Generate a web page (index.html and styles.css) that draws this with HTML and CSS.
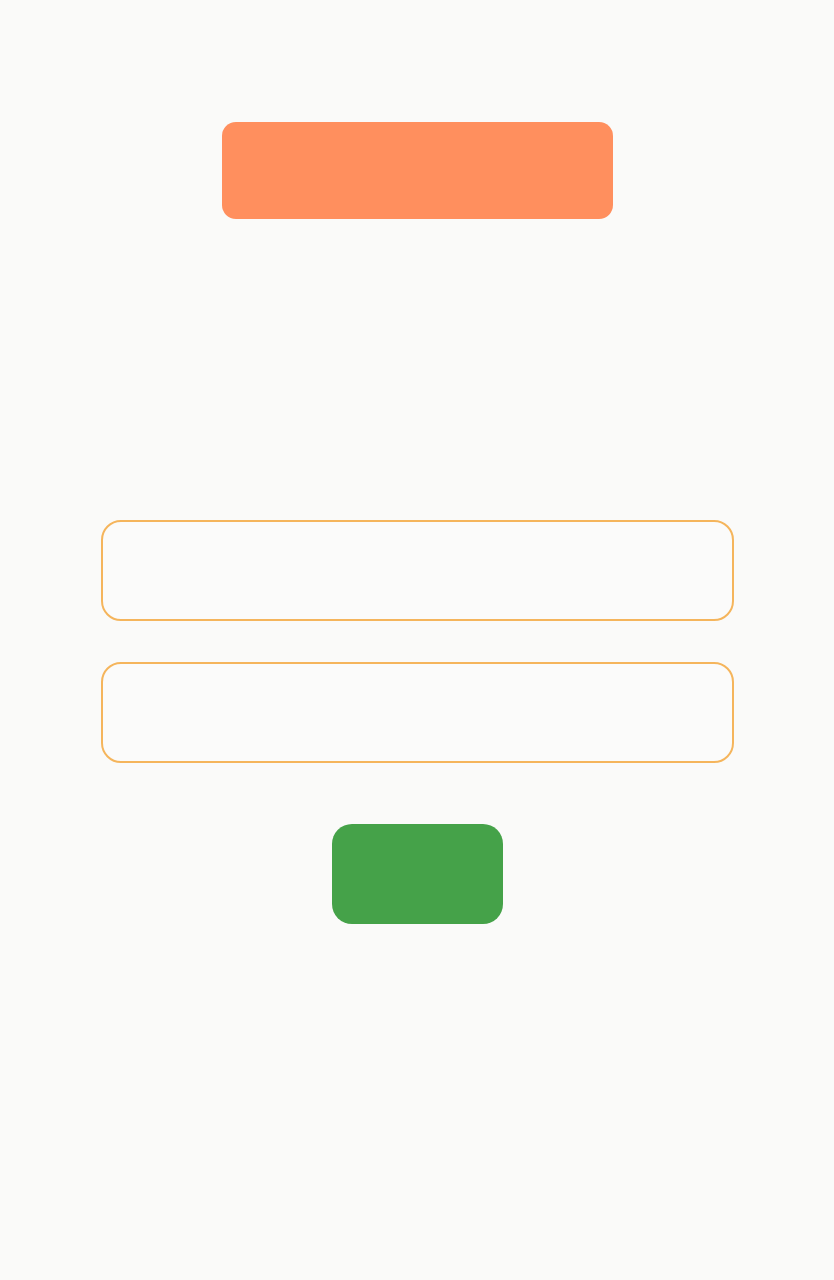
FILE: index.html
```html
<!DOCTYPE html>
<html>
<head>
<meta charset="utf-8">
<link rel="stylesheet" href="styles.css">
</head>
<body>
<main class="screen">
  <div class="banner"></div>
  <form class="form">
    <div class="field"></div>
    <div class="field"></div>
    <button type="button" class="submit"></button>
  </form>
</main>
</body>
</html>
```
FILE: styles.css
```css
html, body {
  margin: 0;
  padding: 0;
  background: #fafaf9;
  font-family: Roboto, "Liberation Sans", sans-serif;
}
.screen {
  min-height: 1280px;
  display: flex;
  flex-direction: column;
  align-items: center;
  padding-top: 122px;
  box-sizing: border-box;
}
.banner {
  width: 391px;
  height: 97px;
  background: #ff8f5e;
  border-radius: 14px;
}
.form {
  margin-top: 301px;
  display: flex;
  flex-direction: column;
  align-items: center;
  width: 633px;
}
.field {
  width: 100%;
  height: 101px;
  box-sizing: border-box;
  border: 2px solid #f5b55c;
  border-radius: 20px;
  background: #fbfbfa;
}
.field + .field {
  margin-top: 41px;
}
.submit {
  margin-top: 61px;
  width: 171px;
  height: 100px;
  border: none;
  border-radius: 20px;
  background: #45a249;
  padding: 0;
}
```
